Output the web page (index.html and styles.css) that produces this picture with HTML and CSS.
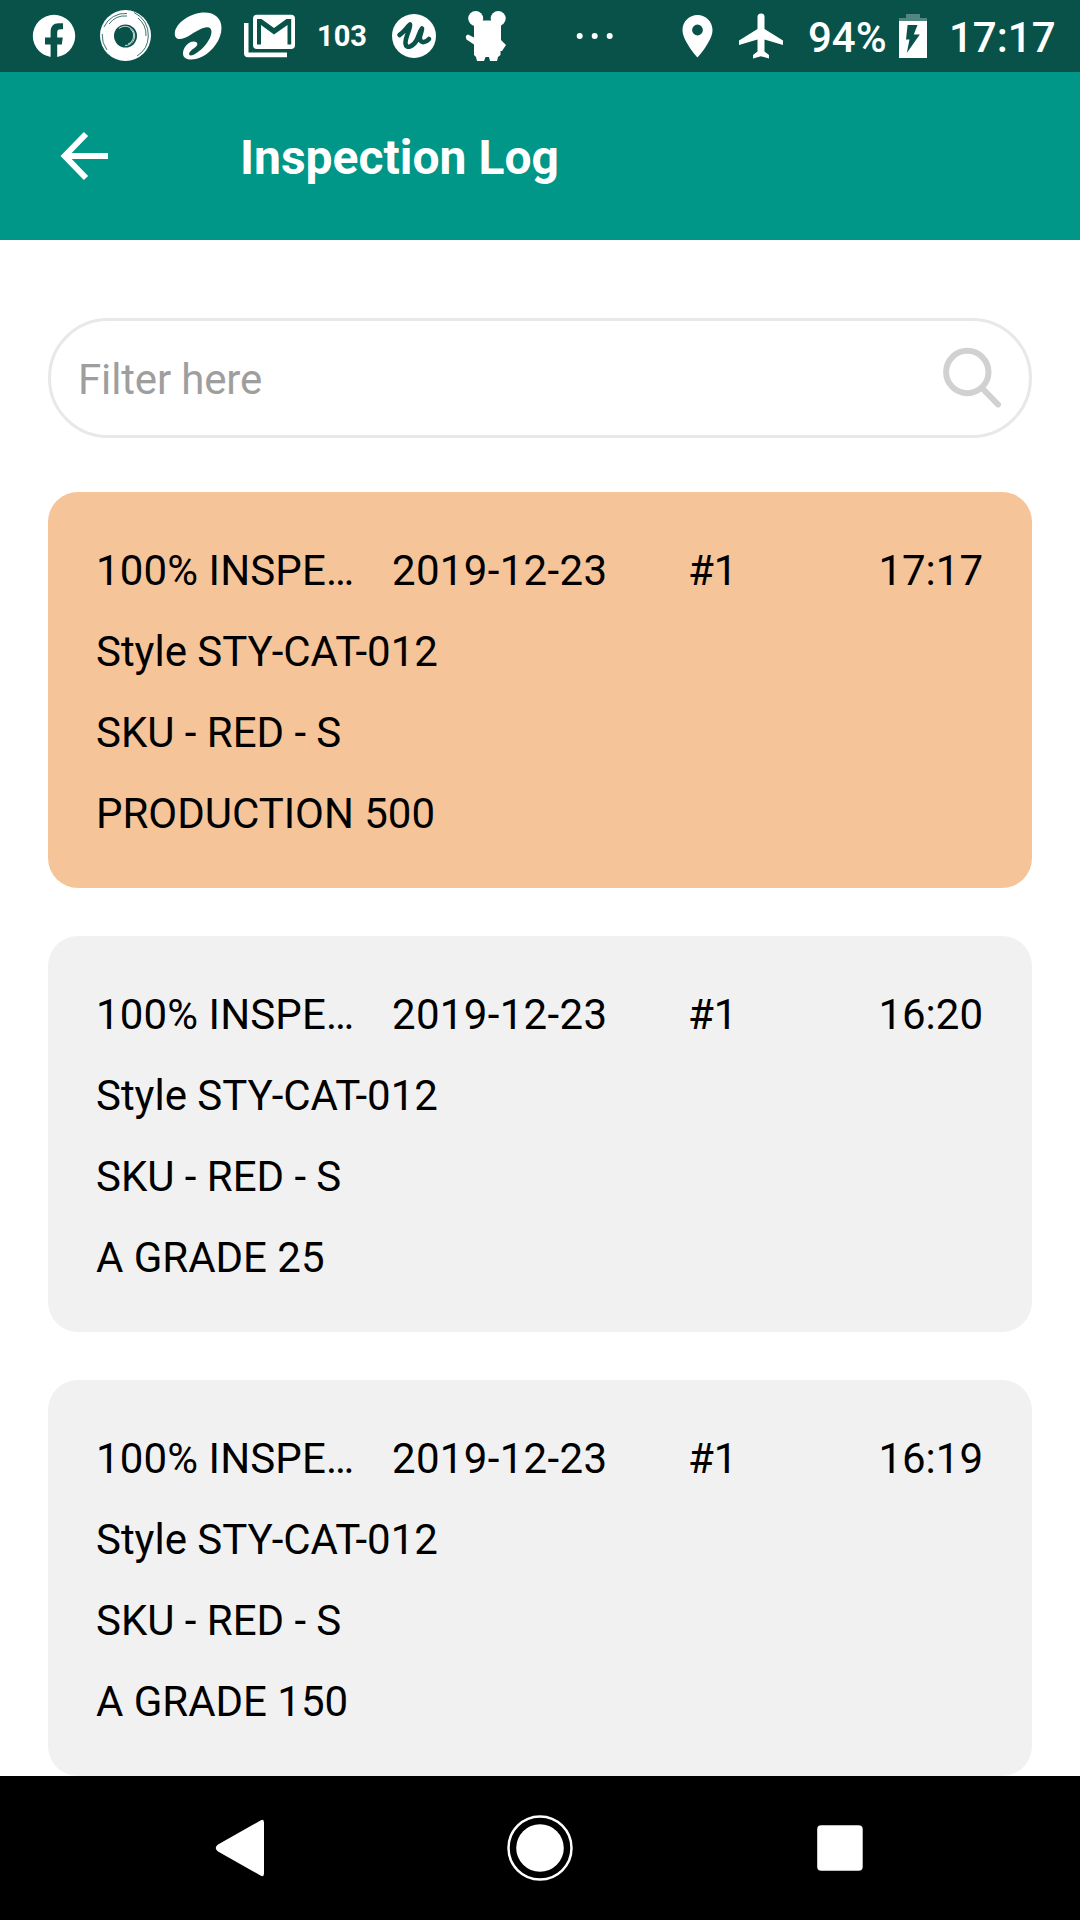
FILE: index.html
```html
<!DOCTYPE html>
<html lang="en">
<head>
<meta charset="utf-8">
<title>Inspection Log</title>
<link rel="stylesheet" href="styles.css">
</head>
<body>
<div class="screen">
  <div class="status-bar">
    <div class="status-group">
      <svg class="status-icon" width="66" height="72" viewBox="22 0 66 72"><circle cx="54" cy="36" r="21.2"/><path class="cut" d="M50.600 58V44.500H45V37.500H50.600V32.500C50.600 26 53.500 23.200 58.500 23.200H63V29.300H60.500C58 29.300 57.200 30.400 57.200 32.700V37.500H62.800L61.800 44.500H57.200V58Z"/></svg>
      <svg class="status-icon" width="75" height="72" viewBox="88 0 75 72"><circle cx="125.500" cy="35.500" r="25.500"/><circle class="cut" cx="125.500" cy="36" r="11.500"/><g class="ring-lines"><path class="cut-line" d="M104 27A23 23 0 0 1 127 13.500M109 24A20 20 0 0 1 127 16"/><path class="cut-line" d="M134 12.500A24.500 24.500 0 0 1 148.300 36A24 24 0 0 1 137 56M138 18A22 22 0 0 1 146 36M102.200 34A24 24 0 0 0 107 50"/><path class="white-line" d="M119 28.500A9.600 9.600 0 1 1 125 45.500M130 28.500A9 9 0 0 1 128 44"/></g></svg>
      <svg class="status-icon" width="70" height="72" viewBox="163 0 70 72"><path d="M174.800 33C175.500 23 191 12.500 204.500 12.500C215 12.500 221.500 18.500 221.500 28C221.500 39 213 51 202.500 56.500C194 61 183 60.800 183 53.500C183 47.500 188.500 41.500 193.500 41.500C198 41.500 198.500 45 195 47.500C191.500 50 188.500 52.500 189.200 54.500C190.500 57.500 199 52.500 205 45.500C210.500 39 213 32 210.500 28.800C207 24.500 197.500 30.500 189.500 35.500C181.500 40.500 174.300 40.500 174.800 33Z"/></svg>
      <svg class="status-icon" width="74" height="72" viewBox="233 0 74 72"><path d="M257 14.800H291Q295 14.800 295 18.800V45Q295 49 291 49H257Q253 49 253 45V18.800Q253 14.800 257 14.800Z"/><path class="cut" d="M257 44.500V19H261.500L274 28L286.500 19H291.200V44.500H287.500V25L274 34.500L261 25V44.500Z"/><path d="M244 23H248.500V52.600H287V57.300H248Q244 57.300 244 53.300Z"/></svg>
      <span class="status-count">103</span>
      <svg class="status-icon" width="70" height="72" viewBox="380 0 70 72"><circle cx="414" cy="36" r="22"/><path class="script-mark" d="M399.500 35C404 32 407 27 410 24.500C411 28 405 37 405.500 43.500C406 50 414 46 417 39.500C419 35 420 31 422 28.500C422.500 31 419 35.500 420 39.500C421.500 43.500 426 42.500 429 39"/></svg>
      <svg class="status-icon" width="90" height="72" viewBox="450 0 90 72"><circle cx="475.700" cy="18.500" r="7.500"/><circle cx="498.200" cy="18.500" r="7.500"/><path d="M482.500 20.500H491.500L496 25H501V40L506 45L502 51H500.500V55L498 57L497 61H490L489 57H485.500L484 61H477L476 57L474 55V44.500L466.500 39.500Q464.500 35.500 468 34.500L474 37.500V25H478Z"/></svg>
      <svg class="status-icon" width="90" height="72" viewBox="540 0 90 72"><circle cx="579.700" cy="36" r="3"/><circle cx="594.700" cy="36" r="3"/><circle cx="609.700" cy="36" r="3"/></svg>
    </div>
    <div class="status-group">
      <svg class="status-icon" width="55" height="72" viewBox="670 0 55 72"><path fill-rule="evenodd" d="M697.500 15C689.200 15 682.500 21.700 682.500 30C682.500 41.200 697.500 57.500 697.500 57.500S712.500 41.200 712.500 30C712.500 21.700 705.800 15 697.500 15ZM697.500 35.400A5.400 5.400 0 1 1 697.500 24.600A5.400 5.400 0 0 1 697.500 35.400Z"/></svg>
      <svg class="status-icon" width="72" height="72" viewBox="725 0 72 72"><path d="M783 45V40.500L764.500 29V17Q764.500 13.500 761 13.500Q757.500 13.500 757.500 17V29L739 40.500V45L757.500 39.500V51.500L753 55V58.500L761 56.300L769 58.500V55L764.500 51.500V39.500Z"/></svg>
      <span class="status-battery">94%</span>
      <svg class="status-icon" width="42" height="72" viewBox="892 0 42 72"><path class="faded" d="M906 14H920V18H927V21H899V18H906Z"/><path d="M899 21H927V58H899Z"/><path class="cut" d="M907.600 25H917.500L913.800 34.500H919.800L906.800 53L909.500 39.500H906Z"/></svg>
      <span class="status-time">17:17</span>
    </div>
  </div>

  <header class="app-bar">
    <svg class="back-icon" width="48" height="54" viewBox="60 130 48 54"><path d="M86 135L64.700 157L86 179M65 157H108"/></svg>
    <h1 class="title">Inspection Log</h1>
  </header>

  <main class="content">
    <div class="filter">
      <span class="placeholder">Filter here</span>
      <svg class="search-icon" width="60" height="62" viewBox="942 347 60 62"><circle cx="967.300" cy="372" r="21.200"/><path d="M983 389L998 404.500"/></svg>
    </div>
    <article class="card card-active">
      <div class="row"><span class="name">100% INSPE…</span><span class="date">2019-12-23</span><span>#1</span><span class="time">17:17</span></div>
      <p>Style STY-CAT-012</p><p>SKU - RED - S</p><p>PRODUCTION 500</p>
    </article>
    <article class="card">
      <div class="row"><span class="name">100% INSPE…</span><span class="date">2019-12-23</span><span>#1</span><span class="time">16:20</span></div>
      <p>Style STY-CAT-012</p><p>SKU - RED - S</p><p>A GRADE 25</p>
    </article>
    <article class="card">
      <div class="row"><span class="name">100% INSPE…</span><span class="date">2019-12-23</span><span>#1</span><span class="time">16:19</span></div>
      <p>Style STY-CAT-012</p><p>SKU - RED - S</p><p>A GRADE 150</p>
    </article>
  </main>

  <nav class="nav-bar">
    <svg width="60" height="64" viewBox="210 1816 60 64"><path class="nav-fill" d="M260.500 1820.500Q264 1818.500 264 1822.500V1873.500Q264 1877.500 260.500 1875.500L218 1851.500Q213.500 1848 218 1844.500Z"/></svg>
    <svg width="70" height="70" viewBox="505 1813 70 70"><circle class="nav-ring" cx="540" cy="1848" r="31.500"/><circle class="nav-fill" cx="540" cy="1848" r="23.800"/></svg>
    <svg width="60" height="60" viewBox="810 1818 60 60"><rect class="nav-fill" x="817.200" y="1825.200" width="45.500" height="45.500" rx="4"/></svg>
  </nav>
</div>
</body>
</html>
```

FILE: styles.css
```css
* { box-sizing: border-box; }

body {
  margin: 0;
  font-family: Roboto, sans-serif;
  color: #000;
  background: #fff;
}

.screen {
  width: 1080px;
  height: 1920px;
  display: flex;
  flex-direction: column;
  overflow: hidden;
}

svg { display: block; flex: none; }

.status-bar {
  flex: none;
  height: 72px;
  padding: 0 0 0 22px;
  display: flex;
  justify-content: space-between;
  background: #08524a;
  color: #fff;
}

.status-group { display: flex; align-items: flex-start; }
.status-icon { fill: #fff; }
.status-icon .cut { fill: #08524a; }
.cut-line { fill: none; stroke: #08524a; stroke-width: 0.8; }
.white-line { fill: none; stroke: #fff; stroke-width: 0.8; }
.status-icon .faded { opacity: 0.3; }

.script-mark {
  fill: none;
  stroke: #08524a;
  stroke-width: 4.6;
  stroke-linecap: round;
  stroke-linejoin: round;
}

.status-count {
  width: 73px;
  padding-left: 10px;
  font-size: 29px;
  line-height: 72px;
  font-weight: 700;
}

.status-battery {
  width: 95px;
  padding-left: 11px;
  font-size: 42px;
  line-height: 75px;
  font-weight: 500;
}

.status-time {
  width: 146px;
  padding-left: 15px;
  font-size: 42px;
  line-height: 75px;
  font-weight: 500;
}

.app-bar {
  flex: none;
  height: 168px;
  padding-left: 60px;
  display: flex;
  align-items: center;
  background: #009788;
  color: #fff;
}

.back-icon { fill: none; stroke: #fff; stroke-width: 6; }
.title { margin: 4px 0 0 132px; font-size: 48px; line-height: 56px; font-weight: 700; }

.content {
  flex: 1;
  min-height: 0;
  padding: 78px 48px 0;
  overflow: hidden;
}

.filter {
  height: 120px;
  margin-bottom: 54px;
  padding: 0 27px;
  display: flex;
  align-items: center;
  justify-content: space-between;
  border: 3px solid #e8e8e8;
  border-radius: 60px;
}

.placeholder {
  padding-top: 4px;
  font-size: 42px;
  line-height: 50px;
  letter-spacing: -0.15px;
  color: #9e9e9e;
}

.search-icon { fill: none; stroke: #d1d1d1; stroke-width: 6; stroke-linecap: round; }

.card {
  height: 396px;
  margin-bottom: 48px;
  padding: 38px 48px 0;
  border-radius: 30px;
  background: #f1f1f1;
  font-size: 42px;
  line-height: 81px;
  white-space: nowrap;
}

.card-active { background: #f5c499; }
.card p { margin: 0; letter-spacing: -0.03px; }
.row { display: grid; grid-template-columns: 296px 296px 148px 147px; }
.name { letter-spacing: 0.12px; }
.date { letter-spacing: 0.33px; }
.time { text-align: right; }

.nav-bar {
  flex: none;
  height: 144px;
  padding: 0 210px;
  display: flex;
  align-items: center;
  justify-content: space-between;
  background: #000;
}

.nav-fill { fill: #fff; }
.nav-ring { fill: none; stroke: #fff; stroke-width: 2.5; }
```
